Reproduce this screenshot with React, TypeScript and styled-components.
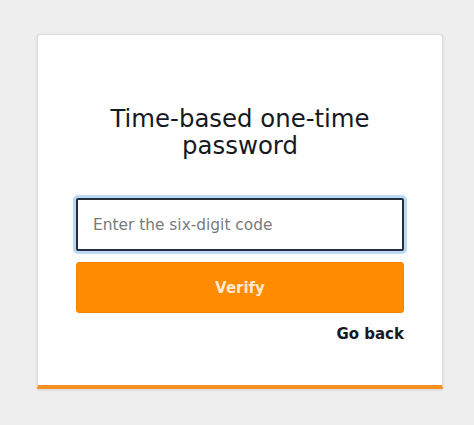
import React, { useState } from 'react';
import styled, { createGlobalStyle } from 'styled-components';

const GlobalStyle = createGlobalStyle`
  html, body {
    margin: 0;
    padding: 0;
    background: #eeeeee;
  }
  body {
    font-family: Verdana, "DejaVu Sans", sans-serif;
  }
`;

const Page = styled.div`
  min-height: 425px;
  padding: 34px 0 0 37px;
  box-sizing: border-box;
`;

const Card = styled.div`
  width: 406px;
  box-sizing: border-box;
  background: #ffffff;
  border: 1px solid #dcdcdc;
  border-bottom: 4px solid #f7901e;
  border-radius: 3px 3px 0 0;
  box-shadow: 0 1px 3px rgba(0, 0, 0, 0.12);
  padding: 70px 38px 42px;
  display: flex;
  flex-direction: column;
`;

const Title = styled.h1`
  margin: 0 0 39px;
  font-size: 24.4px;
  line-height: 27px;
  font-weight: 400;
  color: #16191f;
  text-align: center;
`;

const CodeInput = styled.input`
  height: 53px;
  box-sizing: border-box;
  border: 2px solid #232f3e;
  border-radius: 2px;
  padding: 0 15px;
  font-family: inherit;
  font-size: 15.4px;
  color: #16191f;
  outline: none;
  box-shadow: 0 0 0 3px #bcdaf6;

  &::placeholder {
    color: #7a7a7a;
  }
`;

const VerifyButton = styled.button`
  margin-top: 11px;
  height: 51px;
  border: 1px solid #f38400;
  border-radius: 3px;
  background: #ff8b00;
  color: rgba(255, 255, 255, 0.82);
  font-family: inherit;
  font-size: 15px;
  font-weight: 700;
  cursor: pointer;
`;

const Actions = styled.div`
  display: flex;
  justify-content: flex-end;
  margin-top: 12px;
`;

const BackLink = styled.a`
  font-size: 15px;
  line-height: 18px;
  font-weight: 700;
  color: #16191f;
  text-decoration: none;
  cursor: pointer;
`;

export default function App() {
  const [code, setCode] = useState('');

  return (
    <Page>
      <GlobalStyle />
      <Card>
        <Title>
          Time-based one-time
          <br />
          password
        </Title>
        <CodeInput
          value={code}
          onChange={e => setCode(e.target.value)}
          placeholder="Enter the six-digit code"
        />
        <VerifyButton>Verify</VerifyButton>
        <Actions>
          <BackLink>Go back</BackLink>
        </Actions>
      </Card>
    </Page>
  );
}
